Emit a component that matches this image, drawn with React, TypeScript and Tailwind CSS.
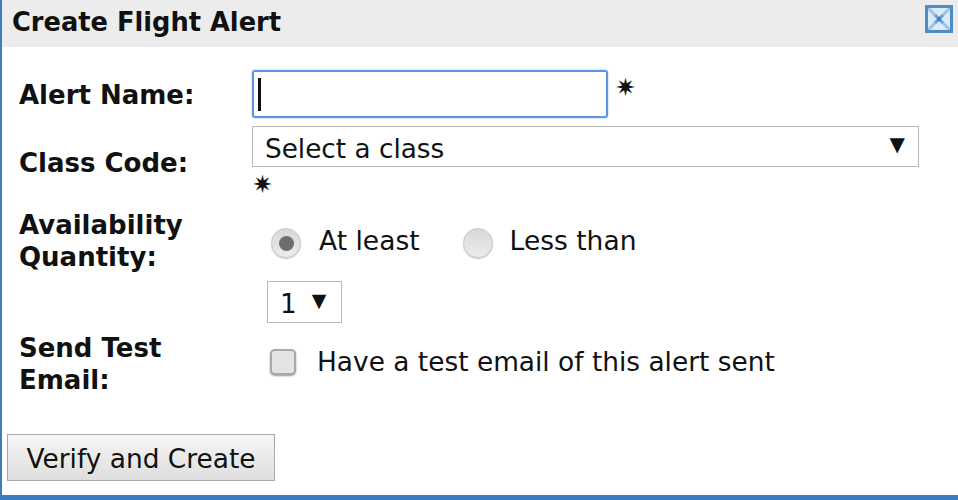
export default function App() {
  return (
    <div className="w-[958px] h-[500px] overflow-hidden bg-white border-l-[2px] border-b-[5px] border-[#3a7dc0] font-['DejaVu_Sans',sans-serif] text-[#111]">
      <div className="h-[47px] bg-[#ececec] flex items-start justify-between pl-[10px] pr-[5px]">
        <h1 className="text-[25.7px] font-bold leading-[44px]">Create Flight Alert</h1>
        <button className="mt-[5px] w-[28px] h-[28px] border-[3px] border-[#4f8cc6] bg-[#dce9f6] flex items-center justify-center" aria-label="Close">
          <svg viewBox="0 0 22 22" className="w-[22px] h-[22px]">
            <path d="M0 0L22 22M22 0L0 22" stroke="#9cc3e8" strokeWidth="3" fill="none" />
            <path d="M7 7L15 15M15 7L7 15" stroke="#6ea4d8" strokeWidth="3" fill="none" />
            <circle cx="11" cy="11" r="2.2" fill="#3f82c4" />
          </svg>
        </button>
      </div>
      <div className="pl-[17px] pt-[23px]">
        <div className="flex">
          <label className="w-[233px] h-[48px] pt-[3px] flex items-center text-[26px] font-bold">Alert Name:</label>
          <div className="w-[356px] h-[48px] border-[2px] border-[#5b95e0] rounded-[3px] flex items-center pl-[4px] shadow-[0_0_2px_#8fb8ee]">
            <span className="w-[3px] h-[33px] bg-[#111]" />
          </div>
          <span className="ml-[7px] mt-[3px] text-[25px] leading-[30px] font-bold">✷</span>
        </div>
        <div className="flex mt-[8px]">
          <label className="w-[233px] pt-[22px] text-[26px] leading-[30px] font-bold">Class Code:</label>
          <div>
            <div className="w-[667px] h-[41px] border border-[#b8b8b8] flex items-center justify-between pl-[12px] pr-[13px] pt-[7px] text-[26.3px]">
              <span>Select a class</span>
              <span className="text-[20px] mb-[12px]">▼</span>
            </div>
            <div className="mt-[3px] text-[25px] leading-[30px] font-bold">✷</div>
          </div>
        </div>
        <div className="flex mt-[-1px]">
          <label className="w-[233px] pt-[10px] text-[26px] leading-[32px] font-bold">Availability<br />Quantity:</label>
          <div className="pt-[24px]">
            <div className="flex items-center pl-[19px] h-[40px] text-[26.5px]">
              <span className="w-[30px] h-[30px] rounded-full border border-[#c8c8c8] bg-gradient-to-b from-[#d8d8d8] to-[#ececec] shadow-[0_1px_1px_#bbb] flex items-center justify-center">
                <span className="w-[15px] h-[15px] rounded-full bg-[#6e6e6e]" />
              </span>
              <span className="ml-[18px] mb-[4px]">At least</span>
              <span className="ml-[43px] w-[30px] h-[30px] rounded-full border border-[#c8c8c8] bg-gradient-to-b from-[#d8d8d8] to-[#ececec] shadow-[0_1px_1px_#bbb]" />
              <span className="ml-[17px] mb-[4px]">Less than</span>
            </div>
            <div className="ml-[15px] mt-[18px] w-[75px] h-[42px] border border-[#b8b8b8] flex items-center pl-[12px] pt-[5px] text-[26.3px]">
              <span>1</span>
              <span className="ml-[15px] mb-[9px] text-[19px]">▼</span>
            </div>
          </div>
        </div>
        <div className="flex mt-[9px]">
          <label className="w-[233px] text-[26px] leading-[32px] font-bold">Send Test<br />Email:</label>
          <div className="flex items-center h-[32px] pl-[18px] mt-[14px] text-[26.4px]">
            <span className="w-[26px] h-[26px] rounded-[5px] border-[2px] border-[#a8a8a8] bg-[#e4e4e4] shadow-[0_1px_2px_#999]" />
            <span className="ml-[21px]">Have a test email of this alert sent</span>
          </div>
        </div>
      </div>
      <button className="ml-[5px] mt-[38px] w-[268px] h-[47px] pt-[3px] border border-[#aaa] bg-gradient-to-b from-[#f6f6f6] to-[#dedede] text-[26.4px]">Verify and Create</button>
    </div>
  );
}
